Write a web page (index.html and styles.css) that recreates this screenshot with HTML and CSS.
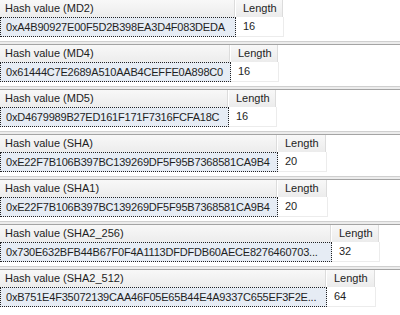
FILE: index.html
```html
<!DOCTYPE html>
<html>
<head>
<meta charset="utf-8">
<link rel="stylesheet" href="styles.css">
</head>
<body>
<div class="stack">
  <section class="grid" style="--hw:236px;--lw:48px">
    <div class="hrow"><div class="hcell hash">Hash value (MD2)</div><div class="hcell len">Length</div></div>
    <div class="drow"><div class="dcell hash sel">0xA4B90927E00F5D2B398EA3D4F083DEDA</div><div class="dcell len">16</div></div>
    <div class="gap"></div><div class="split"></div>
  </section>
  <section class="grid" style="--hw:231px;--lw:48px">
    <div class="hrow"><div class="hcell hash">Hash value (MD4)</div><div class="hcell len">Length</div></div>
    <div class="drow"><div class="dcell hash sel">0x61444C7E2689A510AAB4CEFFE0A898C0</div><div class="dcell len">16</div></div>
    <div class="gap"></div><div class="split"></div>
  </section>
  <section class="grid" style="--hw:229px;--lw:48px">
    <div class="hrow"><div class="hcell hash">Hash value (MD5)</div><div class="hcell len">Length</div></div>
    <div class="drow"><div class="dcell hash sel">0xD4679989B27ED161F171F7316FCFA18C</div><div class="dcell len">16</div></div>
    <div class="gap"></div><div class="split"></div>
  </section>
  <section class="grid" style="--hw:278px;--lw:49px">
    <div class="hrow"><div class="hcell hash">Hash value (SHA)</div><div class="hcell len">Length</div></div>
    <div class="drow"><div class="dcell hash sel">0xE22F7B106B397BC139269DF5F95B7368581CA9B4</div><div class="dcell len">20</div></div>
    <div class="gap"></div><div class="split"></div>
  </section>
  <section class="grid" style="--hw:278px;--lw:50px">
    <div class="hrow"><div class="hcell hash">Hash value (SHA1)</div><div class="hcell len">Length</div></div>
    <div class="drow"><div class="dcell hash sel">0xE22F7B106B397BC139269DF5F95B7368581CA9B4</div><div class="dcell len">20</div></div>
    <div class="gap"></div><div class="split"></div>
  </section>
  <section class="grid" style="--hw:332px;--lw:48px">
    <div class="hrow"><div class="hcell hash">Hash value (SHA2_256)</div><div class="hcell len">Length</div></div>
    <div class="drow"><div class="dcell hash sel">0x730E632BFB44B67F0F4A1113DFDFDB60AECE8276460703...</div><div class="dcell len">32</div></div>
    <div class="gap"></div><div class="split"></div>
  </section>
  <section class="grid" style="--hw:327px;--lw:49px">
    <div class="hrow"><div class="hcell hash">Hash value (SHA2_512)</div><div class="hcell len">Length</div></div>
    <div class="drow"><div class="dcell hash sel">0xB751E4F35072139CAA46F05E65B44E4A9337C655EF3F2E...</div><div class="dcell len">64</div></div>
  </section>
</div>
</body>
</html>
```
FILE: styles.css
```css
html, body {
  margin: 0;
  padding: 0;
  background: #ffffff;
}
body {
  font-family: "Liberation Sans", Arial, sans-serif;
  font-size: 11px;
  letter-spacing: -0.2px;
  color: #1e1e1e;
  width: 400px;
  height: 315px;
  overflow: hidden;
}
.stack {
  display: flex;
  flex-direction: column;
}
.grid {
  display: flex;
  flex-direction: column;
}
.hrow, .drow {
  display: flex;
}
.hrow {
  height: 17px;
}
.drow {
  height: 20px;
}
.hash {
  width: var(--hw);
}
.len {
  width: var(--lw);
}
.hcell {
  box-sizing: border-box;
  height: 17px;
  line-height: 17px;
  padding-left: 5px;
  letter-spacing: 0;
  background: linear-gradient(#f8f8f8, #ececec);
  border-right: 1px solid #ffffff;
  box-shadow: inset -1px 0 0 #dcdcdc;
  white-space: nowrap;
  overflow: hidden;
}
.hcell.len {
  padding-left: 7px;
}
.dcell {
  box-sizing: border-box;
  height: 20px;
  line-height: 18px;
  padding-left: 5px;
  white-space: nowrap;
  overflow: hidden;
}
.dcell.sel {
  background: #e6ecf4;
  border: 1px dotted #222;
}
.dcell.len {
  padding-left: 7px;
  background: #ffffff;
  border-right: 1px solid #ececec;
  border-bottom: 1px solid #ececec;
  line-height: 19px;
}
.gap {
  height: 4px;
}
.split {
  box-sizing: border-box;
  height: 4px;
  background: #ececec;
  border-top: 1px solid #cfcfcf;
  border-bottom: 1px solid #a4a4a4;
}
```
